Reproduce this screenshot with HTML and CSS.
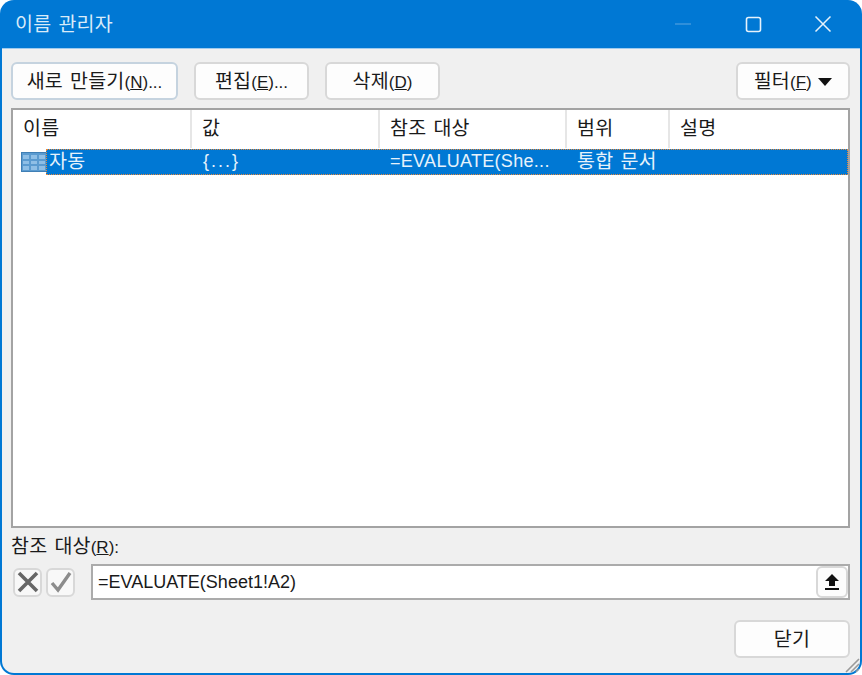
FILE: index.html
```html
<!DOCTYPE html>
<html lang="ko">
<head>
<meta charset="utf-8">
<title>이름 관리자</title>
<link rel="stylesheet" href="styles.css">
</head>
<body>
<div class="window">
  <header class="titlebar">
    <span class="title">이름 관리자</span>
    <div class="controls">
      <svg class="ctl ctl-min" width="20" height="20" viewBox="0 0 20 20"><path d="M2 10h16" stroke="#3f97dc" stroke-width="1.5"/></svg>
      <svg class="ctl" width="20" height="20" viewBox="0 0 20 20"><rect x="3.5" y="3.5" width="14" height="14" rx="2" fill="none" stroke="#e6f2fb" stroke-width="1.6"/></svg>
      <svg class="ctl" width="20" height="20" viewBox="0 0 20 20"><path d="M2.5 2.5l15 15M17.5 2.5l-15 15" stroke="#e6f2fb" stroke-width="1.5"/></svg>
    </div>
  </header>
  <main class="content">
    <div class="toolbar">
      <button class="btn btn-new">새로 만들기<span class="key">(<u>N</u>)...</span></button>
      <button class="btn btn-edit">편집<span class="key">(<u>E</u>)...</span></button>
      <button class="btn btn-del">삭제<span class="key">(<u>D</u>)</span></button>
      <button class="btn btn-filter">필터<span class="key">(<u>F</u>)</span> <svg class="caret" width="14" height="8" viewBox="0 0 14 8"><path d="M0 0h14L7 8z" fill="#111"/></svg></button>
    </div>
    <section class="list">
      <div class="row head">
        <div class="cell">이름</div>
        <div class="cell">값</div>
        <div class="cell">참조 대상</div>
        <div class="cell">범위</div>
        <div class="cell">설명</div>
      </div>
      <div class="item">
        <svg class="tbl-icon" width="26" height="20" viewBox="0 0 26 20">
          <rect x="0.5" y="0.5" width="25" height="19" fill="#5b9bd0" stroke="#3f7fb5"/>
          <path d="M2 3h6v4H2zM10 3h6v4h-6zM18 3h6v4h-6zM2 9h6v3H2zM10 9h6v3h-6zM18 9h6v3h-6zM2 14h6v4H2zM10 14h6v4h-6zM18 14h6v4h-6z" fill="#8fbfe6"/>
        </svg>
        <div class="row selected">
          <div class="cell first">자동</div>
          <div class="cell braces">{...}</div>
          <div class="cell latin">=EVALUATE(She...</div>
          <div class="cell">통합 문서</div>
          <div class="cell"></div>
        </div>
      </div>
    </section>
    <label class="ref-label">참조 대상<span class="key">(<u>R</u>):</span></label>
    <div class="ref-row">
      <button class="mini">
        <svg width="24" height="24" viewBox="0 0 24 24"><path d="M3 3l18 18M21 3L3 21" stroke="#666" stroke-width="3.6"/></svg>
      </button>
      <button class="mini">
        <svg width="24" height="24" viewBox="0 0 24 24"><path d="M3 13l6 7L21 3" fill="none" stroke="#8c8c8c" stroke-width="3.4"/></svg>
      </button>
      <div class="ref-input">
        <span class="ref-text">=EVALUATE(Sheet1!A2)</span>
        <button class="collapse">
          <svg width="16" height="18" viewBox="0 0 16 18"><path d="M8 1l7 7h-4v5H5V8H1z" fill="#111"/><path d="M1 16h14" stroke="#111" stroke-width="2"/></svg>
        </button>
      </div>
    </div>
    <div class="footer">
      <button class="btn btn-close">닫기</button>
    </div>
    <svg class="grip" width="16" height="16" viewBox="0 0 16 16"><path d="M15 2L2 15M15 7l-8 8M15 12l-3 3" stroke="#9a9a9a" stroke-width="1.6"/></svg>
  </main>
</div>
</body>
</html>
```
FILE: styles.css
```css
* { box-sizing: border-box; }
html, body { margin: 0; height: 100%; background: #fff; }
body {
  font-family: "Liberation Sans", "Noto Sans CJK KR", sans-serif;
  font-size: 19.5px;
  letter-spacing: 0.2px;
  word-spacing: 1.5px;
  color: #1a1a1a;
}
.key { font-size: 17px; letter-spacing: 0; }
.window {
  width: 862px;
  height: 675px;
  display: flex;
  flex-direction: column;
  background: #0078d4;
  border-radius: 14px;
  overflow: hidden;
  padding: 0 2px 2px;
}
.titlebar {
  height: 48px;
  flex: none;
  display: flex;
  align-items: center;
  justify-content: space-between;
  padding: 0 27px 0 13px;
}
.title { color: #d9ebf9; font-size: 19.5px; line-height: 24px; }
.controls { display: flex; gap: 50px; }
.ctl { display: block; }
.content {
  flex: 1;
  position: relative;
  background: #f0f0f0;
  border-top: 1px solid #9fcbee;
  border-radius: 0 0 12px 12px;
  padding: 13px 10px 0 9px;
  display: flex;
  flex-direction: column;
}
.btn {
  height: 38px;
  background: #fdfdfd;
  border: 2px solid #d8d8d8;
  border-radius: 6px;
  font: inherit;
  letter-spacing: inherit;
  word-spacing: inherit;
  color: inherit;
  padding: 1px 0 0;
  line-height: 1;
}
.toolbar { display: flex; height: 38px; flex: none; }
.btn-new { width: 167px; border-color: #c5d3df; }
.btn-edit { width: 115px; margin-left: 16px; }
.btn-del { width: 115px; margin-left: 16px; }
.btn-filter { width: 114px; margin-left: auto; word-spacing: 0; }
.caret { vertical-align: 2px; margin-left: 1px; }
.list {
  margin-top: 8px;
  height: 420px;
  flex: none;
  background: #fff;
  border: 2px solid #a3a3a3;
}
.row {
  display: grid;
  grid-template-columns: 179px 188px 187px 103px 1fr;
}
.head { height: 38px; margin-bottom: 1px; }
.head .cell {
  border-right: 2px solid #e6e6e6;
  padding-left: 10px;
  line-height: 37px;
}
.head .cell:last-child { border-right: 0; }
.item { display: flex; height: 26px; padding-left: 8px; }
.tbl-icon { flex: none; margin-top: 3px; margin-right: -1px; }
.selected {
  flex: 1;
  background: #0078d4;
  outline: 1px dotted #e8893a;
  outline-offset: -1px;
  color: #e6f2fb;
  grid-template-columns: 145px 188px 187px 103px 1fr;
  line-height: 24px;
}
.selected .cell { padding-left: 11px; white-space: nowrap; overflow: hidden; }
.selected .first { padding-left: 3px; }
.selected .braces { font-size: 18px; letter-spacing: 2px; padding-left: 12px; }
.selected .latin { font-size: 18px; letter-spacing: 0.3px; }
.ref-label { margin-top: 6px; height: 25px; line-height: 24px; display: block; }
.ref-row { display: flex; align-items: center; margin-top: 5px; height: 36px; }
.mini {
  width: 29px;
  height: 29px;
  margin-left: 2px;
  margin-right: 2px;
  padding: 0;
  background: #f8f8f8;
  border: 2px solid #d8d8d8;
  border-radius: 6px;
  display: flex;
  align-items: center;
  justify-content: center;
}
.mini svg { display: block; }
.ref-input {
  flex: 1;
  height: 36px;
  margin-left: 14px;
  background: #fff;
  border: 2px solid #ababab;
  display: flex;
  align-items: center;
  justify-content: space-between;
  padding-left: 5px;
}
.ref-text { font-size: 18px; letter-spacing: 0; }
.collapse {
  width: 32px;
  height: 32px;
  padding: 0;
  background: #fcfcfc;
  border: 2px solid #d8d8d8;
  border-radius: 6px;
  display: flex;
  align-items: center;
  justify-content: center;
}
.collapse svg { display: block; }
.footer { display: flex; justify-content: flex-end; margin-top: 20px; }
.btn-close { width: 116px; height: 38px; }
.grip { position: absolute; right: 0; bottom: 0; }
```
